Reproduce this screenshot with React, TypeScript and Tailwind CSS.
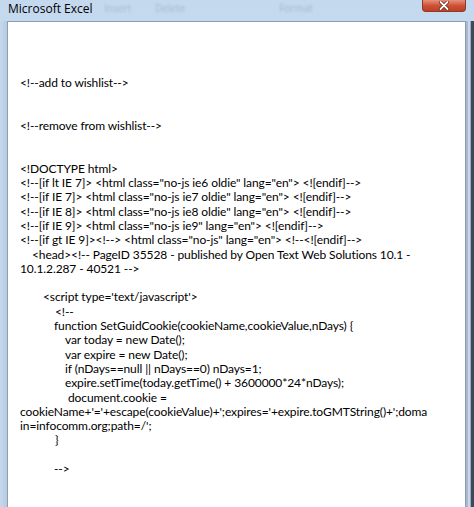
import React from 'react'

const lines: { text: string; indent: number }[] = [
  { text: '<!--add to wishlist-->', indent: 0 },
  { text: '', indent: 0 },
  { text: '', indent: 0 },
  { text: '<!--remove from wishlist-->', indent: 0 },
  { text: '', indent: 0 },
  { text: '', indent: 0 },
  { text: '<!DOCTYPE html>', indent: 0 },
  { text: '<!--[if lt IE 7]> <html class="no-js ie6 oldie" lang="en"> <![endif]-->', indent: 0 },
  { text: '<!--[if IE 7]> <html class="no-js ie7 oldie" lang="en"> <![endif]-->', indent: 0 },
  { text: '<!--[if IE 8]> <html class="no-js ie8 oldie" lang="en"> <![endif]-->', indent: 0 },
  { text: '<!--[if IE 9]> <html class="no-js ie9" lang="en"> <![endif]-->', indent: 0 },
  { text: '<!--[if gt IE 9]><!--> <html class="no-js" lang="en"> <!--<![endif]-->', indent: 0 },
  { text: '<head><!-- PageID 35528 - published by Open Text Web Solutions 10.1 -', indent: 12 },
  { text: '10.1.2.287 - 40521 -->', indent: 0 },
  { text: '', indent: 0 },
  { text: "<script type='text/javascript'>", indent: 23 },
  { text: '<!--', indent: 35 },
  { text: 'function SetGuidCookie(cookieName,cookieValue,nDays) {', indent: 34 },
  { text: 'var today = new Date();', indent: 45 },
  { text: 'var expire = new Date();', indent: 45 },
  { text: 'if (nDays==null || nDays==0) nDays=1;', indent: 45 },
  { text: 'expire.setTime(today.getTime() + 3600000*24*nDays);', indent: 45 },
  { text: 'document.cookie =', indent: 48 },
  { text: "cookieName+'='+escape(cookieValue)+';expires='+expire.toGMTString()+';doma", indent: 0 },
  { text: "in=infocomm.org;path=/';", indent: 0 },
  { text: '}', indent: 35 },
  { text: '', indent: 0 },
  { text: '-->', indent: 34 },
]

export default function App() {
  return (
    <div className="w-[474px] h-[507px] overflow-hidden flex flex-col bg-gradient-to-b from-[#c4d8ee] via-[#d3e3f3] to-[#bdd1e8]">
      {/* title bar, with the blurred ribbon showing through */}
      <div className="relative h-[21px] shrink-0 flex items-start justify-between">
        <div className="absolute left-[104px] top-[1px] flex gap-[24px] text-[10px] text-[#6f8aa8] opacity-40 blur-[1px] font-['Open_Sans',sans-serif]">
          <span>Insert</span>
          <span>Delete</span>
          <span className="pl-[70px]">Format</span>
        </div>
        <span className="relative pl-[8px] pt-[1px] text-[12px] leading-[16px] text-black font-['Open_Sans',sans-serif]">
          Microsoft Excel
        </span>
        <div className="relative mr-[8px] w-[44px] h-[12px] rounded-b-[4px] border border-t-0 border-[#8a3a28] bg-gradient-to-b from-[#e4907a] via-[#cf5236] to-[#bd4024] flex items-center justify-center">
          <svg width="10" height="9" viewBox="0 0 10 9">
            <path d="M1.5 1 L8.5 8 M8.5 1 L1.5 8" stroke="#5a1a10" strokeWidth="3.2" strokeLinecap="round" />
            <path d="M1.5 1 L8.5 8 M8.5 1 L1.5 8" stroke="#ffffff" strokeWidth="1.8" strokeLinecap="round" />
          </svg>
        </div>
      </div>

      <div className="flex flex-1">
        <div className="w-[7px] shrink-0 bg-gradient-to-r from-[#c6d8ec] to-[#b6cbe2]" />
        <div className="flex-1 bg-white border-l border-t border-[#8d9db3] pl-[12px] pt-[54px] font-['Lato',sans-serif] text-[12px] tracking-[-0.1px] text-black">
          {lines.map((l, i) => (
            <div key={i} className="h-[14.3px] leading-[14.3px] whitespace-pre" style={{ paddingLeft: l.indent }}>
              {l.text}
            </div>
          ))}
        </div>
        <div className="w-[9px] shrink-0 flex">
          <div className="w-[1px] bg-[#8a9ab0]" />
          <div className="w-[2px] bg-[#a9bad0]" />
          <div className="w-[2px] bg-[#cbd7e6]" />
          <div className="w-[1px] bg-[#9aabc2]" />
          <div className="flex-1 bg-[#3b4a5e]" />
        </div>
      </div>
    </div>
  )
}
